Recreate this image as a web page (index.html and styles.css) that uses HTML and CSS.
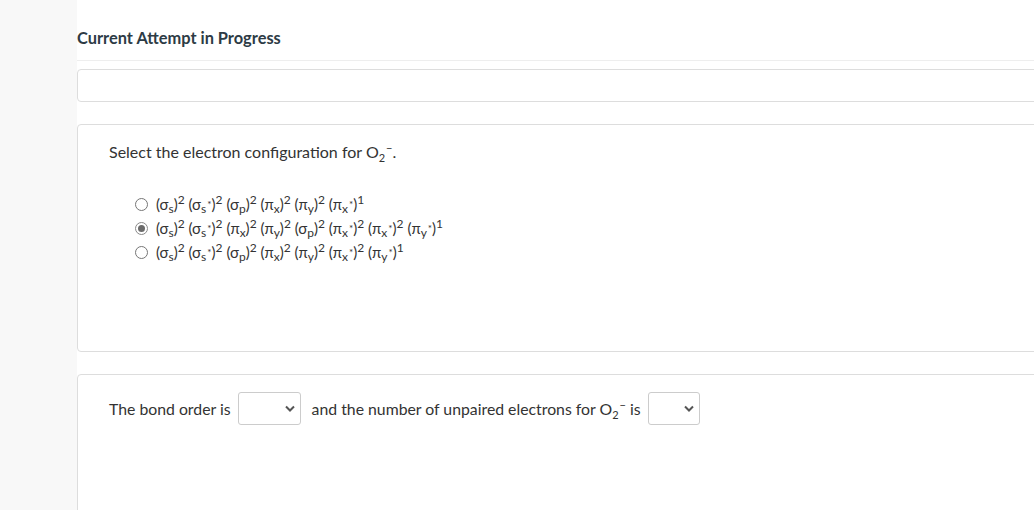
FILE: index.html
```html
<!DOCTYPE html>
<html lang="en">
<head>
  <meta charset="UTF-8" />
  <meta name="viewport" content="width=device-width, initial-scale=1.0" />
  <title>Current Attempt in Progress</title>
  <link rel="stylesheet" href="styles.css">
</head>
<body>
  <div class="sidebar"></div>
  <div class="main">
    <h2 class="title">Current Attempt in Progress</h2>
    <div class="box box-empty"></div>

    <div class="box box-question">
      <p class="prompt">Select the electron configuration for O<sub>2</sub><sup>&minus;</sup>.</p>
      <div class="options">
        <div class="option">
          <span class="radio"></span>
          <span class="formula">
            (σ<sub>s</sub>)<sup>2</sup>
            (σ<sub>s</sub><span class="star">*</span>)<sup>2</sup>
            (σ<sub>p</sub>)<sup>2</sup>
            (π<sub>x</sub>)<sup>2</sup>
            (π<sub>y</sub>)<sup>2</sup>
            (π<sub>x</sub><span class="star">*</span>)<sup>1</sup>
          </span>
        </div>
        <div class="option">
          <span class="radio checked"></span>
          <span class="formula">
            (σ<sub>s</sub>)<sup>2</sup>
            (σ<sub>s</sub><span class="star">*</span>)<sup>2</sup>
            (π<sub>x</sub>)<sup>2</sup>
            (π<sub>y</sub>)<sup>2</sup>
            (σ<sub>p</sub>)<sup>2</sup>
            (π<sub>x</sub><span class="star">*</span>)<sup>2</sup>
            (π<sub>x</sub><span class="star">*</span>)<sup>2</sup>
            (π<sub>y</sub><span class="star">*</span>)<sup>1</sup>
          </span>
        </div>
        <div class="option">
          <span class="radio"></span>
          <span class="formula">
            (σ<sub>s</sub>)<sup>2</sup>
            (σ<sub>s</sub><span class="star">*</span>)<sup>2</sup>
            (σ<sub>p</sub>)<sup>2</sup>
            (π<sub>x</sub>)<sup>2</sup>
            (π<sub>y</sub>)<sup>2</sup>
            (π<sub>x</sub><span class="star">*</span>)<sup>2</sup>
            (π<sub>y</sub><span class="star">*</span>)<sup>1</sup>
          </span>
        </div>
      </div>
    </div>

    <div class="box box-answer">
      <div class="answer-line">
        <span>The bond order is</span>
        <span class="select-wrap wide">
          <select></select>
          <svg class="chev" width="10" height="7" viewBox="0 0 10 7"><path d="M1 1.5 L5 5.5 L9 1.5" fill="none" stroke="#555" stroke-width="2"/></svg>
        </span>
        <span>and the number of unpaired electrons for O<sub>2</sub><sup>&minus;</sup> is</span>
        <span class="select-wrap">
          <select></select>
          <svg class="chev" width="10" height="7" viewBox="0 0 10 7"><path d="M1 1.5 L5 5.5 L9 1.5" fill="none" stroke="#555" stroke-width="2"/></svg>
        </span>
      </div>
    </div>
  </div>
</body>
</html>
```

FILE: styles.css
```css
html, body {
  margin: 0;
  height: 100%;
  overflow: hidden;
}
body {
  display: flex;
  font-family: Lato, "Open Sans", "Liberation Sans", sans-serif;
  color: #333;
  background: #fff;
}
.sidebar {
  width: 77px;
  flex: none;
  background-color: #f8f8f8;
}
.main {
  width: 1000px;
  flex: none;
  padding-top: 28px;
}
.title {
  margin: 0;
  font-size: 16.4px;
  font-weight: bold;
  line-height: 20px;
  color: #2d3b45;
  padding-bottom: 12px;
  border-bottom: 1px solid #eee;
}
.box {
  border: 1px solid #ddd;
  border-radius: 4px;
  box-sizing: border-box;
}
.box-empty {
  margin-top: 8px;
  height: 33px;
}
.box-question {
  margin-top: 22px;
  height: 228px;
  padding: 17px 0 0 31px;
}
.prompt {
  margin: 0;
  font-size: 16px;
  line-height: 20px;
}
sub, sup {
  font-size: 11px;
  line-height: 0;
}
.prompt sup, .answer-line sup {
  margin-left: 1px;
}
.options {
  margin-top: 32px;
  margin-left: 26px;
  display: flex;
  flex-direction: column;
  gap: 4px;
}
.option {
  display: flex;
  align-items: center;
  gap: 8px;
  height: 20px;
}
.radio {
  width: 11px;
  height: 11px;
  border: 1px solid #767676;
  border-radius: 50%;
  flex: none;
  position: relative;
}
.radio.checked {
  border-color: #8a8a8a;
}
.radio.checked::after {
  content: "";
  position: absolute;
  left: 2px;
  top: 2px;
  width: 7px;
  height: 7px;
  border-radius: 50%;
  background-color: #6b6b6b;
}
.formula {
  font-size: 15px;
  line-height: 20px;
  white-space: nowrap;
}
.formula sup {
  font-size: 12px;
  vertical-align: 6px;
}
.formula sub {
  font-size: 12px;
  vertical-align: -3px;
}
.star {
  font-size: 10px;
  line-height: 0;
  vertical-align: 2px;
  margin-left: 1px;
}
.box-answer {
  margin-top: 22px;
  height: 200px;
  padding: 17px 0 0 31px;
}
.answer-line {
  display: flex;
  align-items: center;
  gap: 7px;
  font-size: 15.8px;
  height: 33px;
}
.select-wrap {
  position: relative;
  display: inline-block;
  width: 52px;
  height: 33px;
}
.select-wrap.wide {
  width: 63px;
  margin-right: 4px;
}
.select-wrap select {
  appearance: none;
  width: 100%;
  height: 100%;
  border: 1px solid #ccc;
  border-radius: 3px;
  background: #fff;
  margin: 0;
}
.chev {
  position: absolute;
  right: 6px;
  top: 13px;
  pointer-events: none;
}
```
